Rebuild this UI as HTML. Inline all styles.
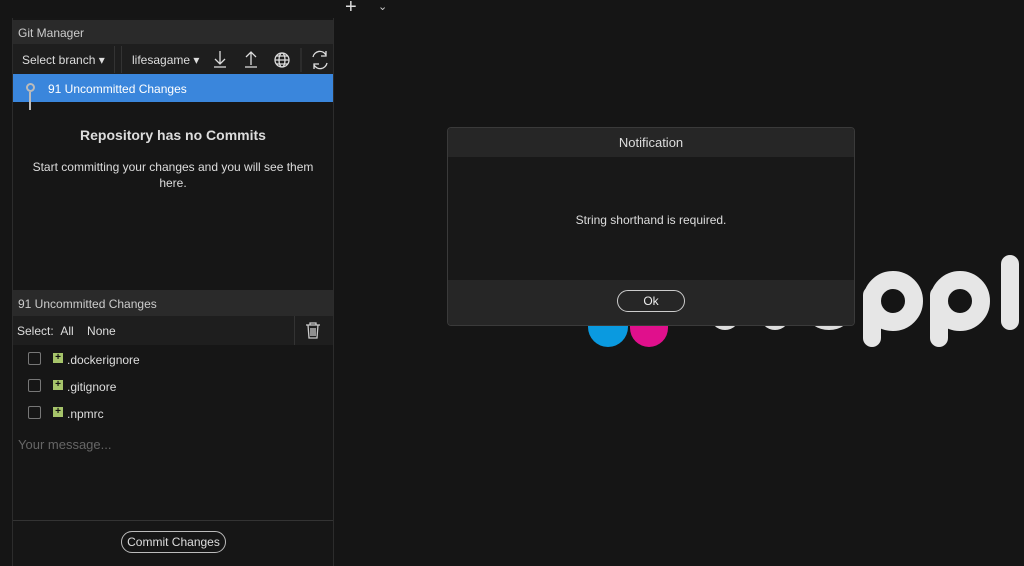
<!DOCTYPE html>
<html><head><meta charset="utf-8"><style>
*{box-sizing:border-box;margin:0;padding:0}
body{width:1024px;height:566px;background:#151515;font-family:"Liberation Sans",sans-serif;color:#ddd;position:relative;overflow:hidden;font-size:12px}
.a{position:absolute}
</style></head><body>
<div class="a" style="left:12px;top:18px;width:322px;height:548px;background:#161616;border-left:1px solid #2c2c2c;border-right:1px solid #2c2c2c"></div>
<div class="a" style="left:13px;top:20px;width:320px;height:24px;background:#2a2a2a;padding:6px 5px;color:#ccc">Git Manager</div>
<div class="a" style="left:13px;top:44px;width:320px;height:30px;background:#1e1e1e"></div>
<div class="a" style="left:22px;top:53px;color:#ddd">Select branch ▾</div>
<div class="a" style="left:114px;top:46px;width:8px;height:27px;border-left:1px solid #333;border-right:1px solid #333"></div>
<div class="a" style="left:132px;top:53px;color:#ddd">lifesagame ▾</div>
<svg class="a" style="left:210px;top:48px" width="120" height="24" fill="none" stroke="#ddd" stroke-width="1.3">
<path d="M10 3v13M5 11l5 5 5-5M4 19h12"/>
<path d="M41 4v13M36 9l5-5 5 5M35 19h12"/>
<circle cx="72" cy="12" r="7"/><ellipse cx="72" cy="12" rx="3" ry="7"/><path d="M65 12h14M66 8h12M66 16h12"/>
<path d="M91 0v24" stroke="#333"/>
<path d="M103 9a7 7 0 0 1 13-2M117 15a7 7 0 0 1-13 2M116 3v5h-5M104 21v-5h5"/>
</svg>
<div class="a" style="left:13px;top:74px;width:320px;height:28px;background:#3a86dc;padding:8px 35px;color:#fff">91 Uncommitted Changes</div>
<div class="a" style="left:26px;top:83px;width:9px;height:9px;border:2px solid #bbb;border-radius:50%"></div>
<div class="a" style="left:29px;top:92px;width:2px;height:18px;background:#bbb"></div>
<div class="a" style="left:13px;top:127px;width:320px;text-align:center;font-weight:bold;font-size:14px;color:#ddd">Repository has no Commits</div>
<div class="a" style="left:30px;top:159px;width:286px;text-align:center;line-height:16px;color:#ddd">Start committing your changes and you will see them here.</div>
<div class="a" style="left:13px;top:290px;width:320px;height:26px;background:#2a2a2a;padding:7px 5px;color:#ccc">91 Uncommitted Changes</div>
<div class="a" style="left:13px;top:316px;width:320px;height:29px;background:#1e1e1e;padding:8px 4px;color:#ddd">Select: &nbsp;All &nbsp;&nbsp; None</div>
<div class="a" style="left:294px;top:316px;width:1px;height:29px;background:#333"></div>
<svg class="a" style="left:304px;top:321px" width="18" height="19" fill="none" stroke="#ccc" stroke-width="1.3"><path d="M2 4h14M6 4V2h6v2M4 4l1 13h8l1-13M7 7v8M9 7v8M11 7v8"/></svg>
<div class="a" style="left:28px;top:352px;width:13px;height:13px;border:1px solid #777;border-radius:2px"></div>
<div class="a" style="left:28px;top:379px;width:13px;height:13px;border:1px solid #777;border-radius:2px"></div>
<div class="a" style="left:28px;top:406px;width:13px;height:13px;border:1px solid #777;border-radius:2px"></div>
<div class="a" style="left:53px;top:353px;width:10px;height:10px;background:#a6c46a;color:#111;font-size:10px;line-height:10px;text-align:center;font-weight:bold">+</div>
<div class="a" style="left:53px;top:380px;width:10px;height:10px;background:#a6c46a;color:#111;font-size:10px;line-height:10px;text-align:center;font-weight:bold">+</div>
<div class="a" style="left:53px;top:407px;width:10px;height:10px;background:#a6c46a;color:#111;font-size:10px;line-height:10px;text-align:center;font-weight:bold">+</div>
<div class="a" style="left:67px;top:353px">.dockerignore</div>
<div class="a" style="left:67px;top:380px">.gitignore</div>
<div class="a" style="left:67px;top:407px">.npmrc</div>
<div class="a" style="left:18px;top:437px;color:#666;font-size:13px">Your message...</div>
<div class="a" style="left:13px;top:520px;width:320px;height:1px;background:#333"></div>
<div class="a" style="left:121px;top:531px;width:105px;height:22px;border:1px solid #bbb;border-radius:11px;text-align:center;line-height:20px;color:#ddd">Commit Changes</div>
<div class="a" style="left:345px;top:-4px;font-size:20px;color:#ddd">+</div>
<div class="a" style="left:378px;top:0px;font-size:11px;color:#ccc">⌄</div>
<!-- logo -->
<div class="a" style="left:588px;top:300px;width:40px;height:47px;background:#0a9ae0;border-radius:0 0 20px 20px"></div>
<div class="a" style="left:630px;top:300px;width:38px;height:47px;background:#e0108c;border-radius:0 0 19px 19px"></div>
<div class="a" style="left:710px;top:300px;width:30px;height:30px;background:#ddd;border-radius:50%"></div>
<div class="a" style="left:760px;top:300px;width:30px;height:30px;background:#ddd;border-radius:50%"></div>
<div class="a" style="left:808px;top:300px;width:42px;height:30px;background:#ddd;border-radius:50%"></div>
<svg class="a" style="left:850px;top:245px" width="174" height="110" fill="none" stroke="#e6e6e6" stroke-width="18" stroke-linecap="round">
<circle cx="43" cy="56" r="21"/><path d="M22 50v43"/>
<circle cx="110" cy="56" r="21"/><path d="M89 50v43"/>
<path d="M160 19v57"/>
</svg>
<!-- dialog -->
<div class="a" style="left:447px;top:127px;width:408px;height:199px;border:1px solid #3a3a3a;border-radius:4px;background:#181818;overflow:hidden">
<div style="height:29px;background:#262626;text-align:center;line-height:30px;font-size:13px;color:#ddd">Notification</div>
<div style="height:123px;text-align:center;padding-top:56px;color:#ddd">String shorthand is required.</div>
<div style="height:47px;background:#262626;position:relative"><div class="a" style="left:169px;top:10px;width:68px;height:22px;border:1px solid #ccc;border-radius:11px;text-align:center;line-height:20px;color:#eee">Ok</div></div>
</div>
</body></html>
